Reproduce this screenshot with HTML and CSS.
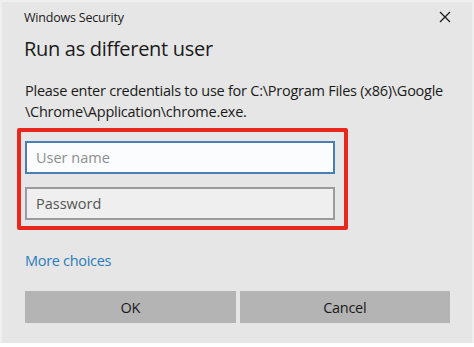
FILE: index.html
```html
<!DOCTYPE html>
<html lang="en">
<head>
  <meta charset="UTF-8">
  <title>Windows Security</title>
  <link rel="stylesheet" href="styles.css">
</head>
<body>

<div id="dialog">
  <div id="title-bar">
    <span id="title-text">Windows Security</span>
    <button id="close-button" aria-label="Close">
      <svg width="12" height="12" viewBox="0 0 12 12">
        <path d="M1 1 L11 11 M11 1 L1 11" stroke="#1a1a1a" stroke-width="1.3" fill="none"/>
      </svg>
    </button>
  </div>

  <div id="heading">Run as different user</div>
  <div id="message">Please enter credentials to use for C:\Program Files (x86)\Google \Chrome\Application\chrome.exe.</div>

  <div id="credential-box">
    <input type="text" class="field field-active" placeholder="User name">
    <input type="password" class="field" placeholder="Password">
  </div>

  <a href="#" id="more-choices">More choices</a>

  <div id="button-row">
    <button class="dialog-button">OK</button>
    <button class="dialog-button">Cancel</button>
  </div>
</div>

</body>
</html>
```
FILE: styles.css
```css
body {
    background: #fff;
    margin: 0;
    padding: 0;
    font-family: 'Open Sans', 'Noto Sans', sans-serif;
    color: #1a1a1a;
}

#dialog {
    width: 474px;
    height: 343px;
    box-sizing: border-box;
    background: #e6e6e6;
    border: 2px solid #efefef;
    border-bottom: none;
    padding: 0 22px 0 22px;
    display: flex;
    flex-direction: column;
}

#title-bar {
    display: flex;
    justify-content: space-between;
    align-items: center;
    height: 32px;
    margin-top: -1px;
}

#title-text {
    font-size: 12.5px;
    letter-spacing: -0.2px;
}

#close-button {
    background: none;
    border: none;
    padding: 0;
    margin-right: -2px;
    width: 14px;
    height: 14px;
    display: flex;
    align-items: center;
    justify-content: center;
}

#heading {
    font-size: 20px;
    letter-spacing: -0.3px;
    margin-top: 2px;
    line-height: 28px;
}

#message {
    font-size: 14.5px;
    letter-spacing: -0.25px;
    line-height: 21px;
    margin-top: 17px;
    padding-left: 1px;
}

#credential-box {
    width: 331px;
    box-sizing: border-box;
    margin-top: 6px;
    margin-left: -7px;
    border: 4px solid #e8281c;
    border-radius: 2px;
    padding: 9px 9px 6px 4px;
    display: flex;
    flex-direction: column;
    gap: 13px;
}

.field {
    height: 33px;
    width: 310px;
    box-sizing: border-box;
    border: 2px solid #9b9b9b;
    background: #efefef;
    font-family: 'Open Sans', 'Noto Sans', sans-serif;
    font-size: 14.5px;
    padding: 0 9px;
    margin: 0;
    outline: none;
}

.field::placeholder {
    color: #555;
}

.field-active {
    background: #fafcfe;
    border-color: #4a7fb4;
}

.field-active::placeholder {
    color: #8e8e8e;
}

#more-choices {
    color: #2b7cbd;
    text-decoration: none;
    font-size: 14.5px;
    letter-spacing: -0.3px;
    margin-top: 21px;
    padding-left: 1px;
    align-self: flex-start;
}

#button-row {
    display: flex;
    gap: 4px;
    margin-top: 21px;
    padding-left: 1px;
    width: 425px;
}

.dialog-button {
    flex: 1;
    height: 32px;
    background: #b4b4b4;
    border: none;
    border-radius: 0;
    font-family: 'Open Sans', 'Noto Sans', sans-serif;
    font-size: 14.5px;
    color: #1a1a1a;
    letter-spacing: -0.3px;
}
```
